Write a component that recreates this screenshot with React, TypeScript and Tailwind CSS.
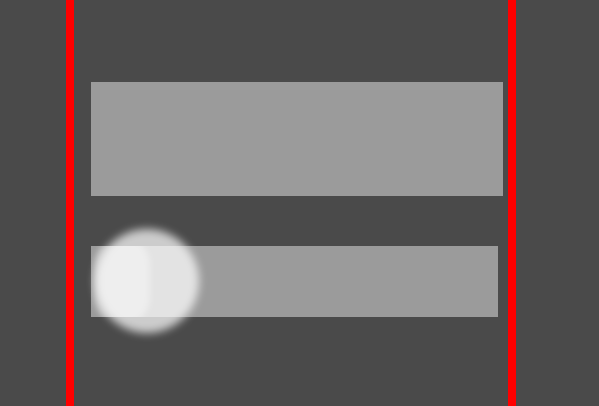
import React from "react";

const App = () => {
  return (
    <div className="w-[599px] h-[406px] bg-[#4a4a4a] overflow-hidden">
      {/* frame between the red rails */}
      <div className="ml-[66px] w-[450px] h-[406px] border-x-8 border-[#ff0000] pl-[17px] pt-[82px] flex flex-col gap-[50px]">
        {/* top bar */}
        <div className="w-[412px] h-[114px] bg-[#9b9b9b]" />

        {/* bottom bar with press ripple */}
        <div className="relative w-[407px] h-[71px] bg-[#9b9b9b]">
          <div className="absolute left-[4px] top-[-17px] w-[104px] h-[104px] rounded-full bg-white/72 blur-[4px]" />
          <div className="absolute inset-0 overflow-hidden">
            <div className="absolute left-[4px] top-[-9px] w-[55px] h-[88px] rounded-full bg-white/40 blur-[3px]" />
          </div>
        </div>
      </div>
    </div>
  );
};

export default App;
